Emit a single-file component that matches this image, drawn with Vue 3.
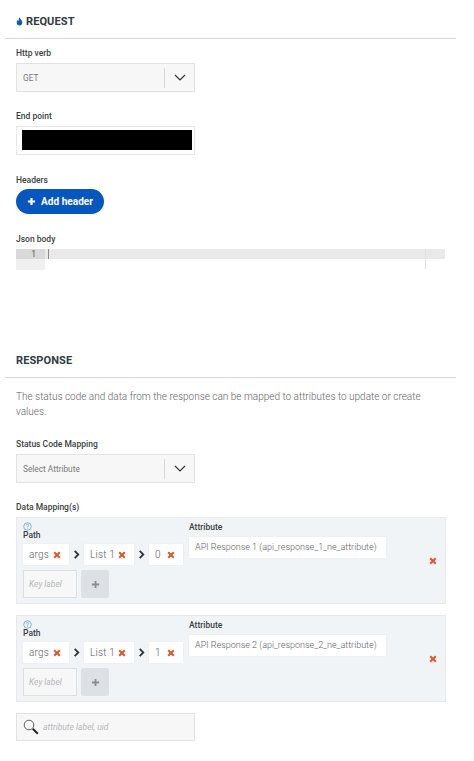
<script setup>
const mappings = [
  { index: '0', attribute: 'API Response 1 (api_response_1_ne_attribute)' },
  { index: '1', attribute: 'API Response 2 (api_response_2_ne_attribute)' }
]
</script>

<template>
  <main class="page">
    <section class="request">
      <h2 class="title">
        <svg class="drop" viewBox="0 0 10 12"><path d="M5 0C5.6 2 9 4.6 9 7.6A4 4 0 0 1 1 7.6C1 6 1.9 4.8 2.6 4C2.8 5 3.2 5.500 3.800 5.700C3.500 3.800 4 1.500 5 0Z" /></svg>
        REQUEST
      </h2>
      <div class="body">
        <label class="label l-verb">Http verb</label>
        <div class="select">
          <span>GET</span>
          <div class="caret"><svg viewBox="0 0 12 7"><path d="M1 1l5 5 5-5" /></svg></div>
        </div>
        <label class="label l-end">End point</label>
        <div class="endpoint"><div class="redacted"></div></div>
        <label class="label l-head">Headers</label>
        <button class="add" type="button">
          <svg viewBox="0 0 10 10"><path d="M5 1v8M1 5h8" /></svg>
          Add header
        </button>
        <label class="label l-json">Json body</label>
        <div class="editor">
          <div class="gutter"><div class="num">1</div></div>
          <div class="code">
            <div class="active"><i class="cursor"></i></div>
            <i class="margin"></i>
          </div>
        </div>
      </div>
    </section>

    <section class="response">
      <h2 class="title">RESPONSE</h2>
      <div class="body">
        <p class="intro">The status code and data from the response can be mapped to attributes to update or create values.</p>
        <label class="label l-status">Status Code Mapping</label>
        <div class="select">
          <span>Select Attribute</span>
          <div class="caret"><svg viewBox="0 0 12 7"><path d="M1 1l5 5 5-5" /></svg></div>
        </div>
        <label class="label l-data">Data Mapping(s)</label>
        <div class="cards">
          <article v-for="m in mappings" :key="m.index" class="card">
            <div class="path-col">
              <svg class="help" viewBox="0 0 10 10"><circle cx="5" cy="5" r="4.200" /><path d="M3.700 3.900C3.700 2 6.400 2.200 6.400 3.800C6.400 4.900 5 4.900 5 6.200M5 7.200v.7" /></svg>
              <div class="label path-label">Path</div>
              <div class="chips">
                <div class="chip c-args">args<svg class="x" viewBox="0 0 10 10"><path d="M1.500 1.500l7 7M8.500 1.500l-7 7" /></svg></div>
                <svg class="sep" viewBox="0 0 7 10"><path d="M1.500 1l4 4-4 4" /></svg>
                <div class="chip c-list">List 1<svg class="x" viewBox="0 0 10 10"><path d="M1.500 1.500l7 7M8.500 1.500l-7 7" /></svg></div>
                <svg class="sep" viewBox="0 0 7 10"><path d="M1.500 1l4 4-4 4" /></svg>
                <div class="chip c-idx">{{ m.index }}<svg class="x" viewBox="0 0 10 10"><path d="M1.500 1.500l7 7M8.500 1.500l-7 7" /></svg></div>
              </div>
              <div class="key-row">
                <div class="key">Key label</div>
                <div class="plus"><svg viewBox="0 0 10 10"><path d="M5 1v8M1 5h8" /></svg></div>
              </div>
            </div>
            <div class="attr-col">
              <div class="label">Attribute</div>
              <div class="attr">{{ m.attribute }}</div>
            </div>
            <svg class="x remove" viewBox="0 0 10 10"><path d="M1.500 1.500l7 7M8.500 1.500l-7 7" /></svg>
          </article>
        </div>
        <div class="search">
          <svg viewBox="0 0 16 16"><circle cx="6" cy="6" r="4.800" class="lens" /><path d="M9.800 9.800l5 5" class="handle" /></svg>
          <span>attribute label, uid</span>
        </div>
      </div>
    </section>
  </main>
</template>

<style scoped>
.page {
  width: 474px;
  height: 761px;
  overflow: hidden;
  background: #fff;
  font-family: Roboto, "Liberation Sans", sans-serif;
  color: #6f6f6f;
  box-sizing: border-box;
  padding-top: 15px;
}
.title {
  display: flex;
  align-items: flex-start;
  gap: 3px;
  width: 451px;
  height: 24px;
  margin: 0 0 0 5px;
  padding: 0 0 0 11px;
  box-sizing: border-box;
  border-bottom: 1px solid #d6d6d6;
  font-size: 11px;
  font-weight: 700;
  letter-spacing: .1px;
  color: #303a42;
  line-height: 14px;
}
.drop { width: 7px; height: 9px; margin-top: 2px; fill: #0c5bb5; }
.body { padding-left: 16px; }
.label {
  display: block;
  font-size: 8.500px;
  line-height: 11px;
  font-weight: 500;
  color: #3b3f42;
}
.l-verb { padding-top: 9px; padding-bottom: 4px; }
.l-end { padding-top: 19px; padding-bottom: 4px; }
.l-head { padding-top: 20px; padding-bottom: 3px; }
.l-json { padding-top: 20px; padding-bottom: 4px; }
.l-status { padding-top: 20px; padding-bottom: 4px; }
.l-data { padding-top: 19px; padding-bottom: 4px; }
.select {
  width: 179px;
  height: 29px;
  box-sizing: border-box;
  display: flex;
  align-items: center;
  justify-content: space-between;
  background: #f7f7f7;
  border: 1px solid #e2e2e2;
  padding-left: 6px;
  font-size: 8.300px;
  color: #77797b;
}
.caret {
  width: 29px;
  height: 20px;
  border-left: 1px solid #d8d8d8;
  display: flex;
  align-items: center;
  justify-content: center;
}
.caret svg { width: 12px; height: 7px; fill: none; stroke: #2f3438; stroke-width: 1.200; }
.endpoint {
  width: 179px;
  height: 29px;
  box-sizing: border-box;
  border: 1px solid #e6e6e6;
  background: #fff;
  padding: 3px 2px 4px 5px;
}
.redacted { height: 100%; background: #000; }
.add {
  display: flex;
  align-items: center;
  gap: 5px;
  width: 88px;
  height: 25px;
  padding: 0 0 0 11px;
  border: 0;
  border-radius: 13px;
  background: #0657bd;
  color: #fff;
  font: 700 10.100px Roboto, "Liberation Sans", sans-serif;
}
.add svg { width: 9px; height: 9px; fill: none; stroke: #fff; stroke-width: 2.400; }
.editor { display: flex; width: 429px; height: 21px; }
.gutter { width: 29px; background: #f0f0f0; }
.num {
  height: 10px;
  background: #d9d9d9;
  text-align: right;
  padding-right: 9px;
  box-sizing: border-box;
  font-size: 8.500px;
  line-height: 10px;
  color: #555;
}
.code { position: relative; flex: 1; }
.active { height: 10px; background: #e9e9e9; }
.cursor { display: block; margin-left: 3px; width: 1px; height: 10px; background: #888; }
.margin { position: absolute; left: 380px; top: 0; width: 1px; height: 20px; background: #e0e0e0; }
.response { padding-top: 84px; }
.intro {
  margin: 11px 30px 0 0;
  width: 412px;
  font-size: 10px;
  line-height: 15px;
  font-weight: 300;
  color: #5f6468;
}
.cards { display: flex; flex-direction: column; gap: 11px; }
.card {
  position: relative;
  display: flex;
  width: 430px;
  height: 87px;
  box-sizing: border-box;
  background: #f1f4f7;
  border: 1px solid #e6eaee;
  padding: 4px 0 0 6px;
}
.path-col { width: 166px; }
.help { display: block; width: 9px; height: 9px; fill: none; stroke: #4a8ac4; stroke-width: .7; }
.path-label { line-height: 9px; }
.chips { display: flex; align-items: center; margin-top: 4px; }
.chip {
  display: flex;
  align-items: center;
  justify-content: space-between;
  height: 21px;
  box-sizing: border-box;
  padding: 0 8px 0 6px;
  background: #fff;
  box-shadow: 0 0 0 .5px #e9edf0;
  font-size: 10px;
  font-weight: 300;
  color: #5c6064;
  letter-spacing: .2px;
}
.c-args { width: 46px; }
.c-list { width: 50px; }
.c-idx { width: 34px; }
.sep { width: 7px; height: 9px; margin: 0 4px; fill: none; stroke: #2d3640; stroke-width: 2; flex: none; }
.x { width: 8px; height: 8px; fill: none; stroke: #e0552d; stroke-width: 2.500; flex: none; }
.key-row { display: flex; gap: 4px; margin-top: 5px; }
.key {
  width: 54px;
  height: 28px;
  box-sizing: border-box;
  background: #f7f7f7;
  border: 1px solid #dde0e2;
  padding-left: 5px;
  font-size: 8.500px;
  font-style: italic;
  line-height: 26px;
  color: #b5b8bb;
}
.plus {
  width: 28px;
  height: 28px;
  border-radius: 2px;
  background: #dde0e4;
  display: flex;
  align-items: center;
  justify-content: center;
}
.plus svg { width: 9px; height: 9px; fill: none; stroke: #8a8f94; stroke-width: 2; }
.attr-col { width: 197px; }
.attr-col .label { margin-bottom: 4px; }
.attr {
  width: 197px;
  height: 21px;
  box-sizing: border-box;
  background: #fff;
  box-shadow: 0 0 0 .5px #e9edf0;
  padding-left: 6px;
  font-size: 9px;
  font-weight: 300;
  line-height: 20px;
  white-space: nowrap;
  color: #5c6064;
}
.remove { position: absolute; left: 412px; top: 39px; width: 8px; height: 8px; }
.search {
  margin-top: 11px;
  width: 179px;
  height: 28px;
  box-sizing: border-box;
  background: #f7f7f7;
  border: 1px solid #e2e2e2;
  display: flex;
  align-items: center;
  gap: 4px;
  padding-left: 6px;
  font-size: 8.500px;
  font-style: italic;
  color: #b5b8bb;
}
.search svg { width: 16px; height: 16px; fill: none; }
.lens { stroke: #5a6066; stroke-width: 1; }
.handle { stroke: #23282d; stroke-width: 2; }
</style>
